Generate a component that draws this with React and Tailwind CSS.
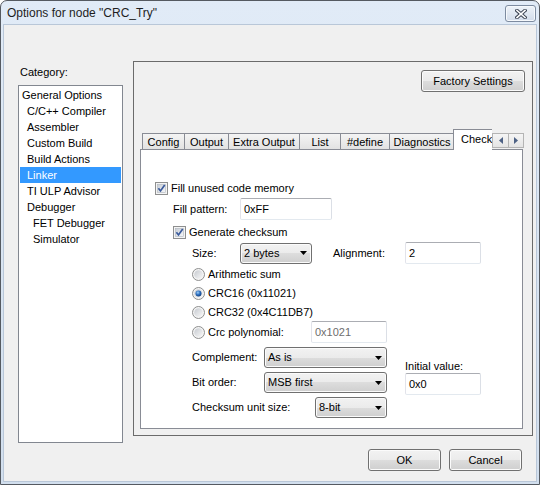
import React from "react";

const Check = () => (
  <svg width="13" height="13" viewBox="0 0 13 13" className="shrink-0">
    <defs>
      <linearGradient id="cbg" x1="0" y1="0" x2="1" y2="1">
        <stop offset="0" stopColor="#c6ccd4" />
        <stop offset="1" stopColor="#f7f8fa" />
      </linearGradient>
    </defs>
    <rect x="0.5" y="0.5" width="12" height="12" fill="#f4f4f4" stroke="#8e8f8f" />
    <rect x="2.5" y="2.5" width="8" height="8" fill="url(#cbg)" stroke="#aeb4bd" strokeWidth="0.6" />
    <path d="M3.4 6.2 L5.5 8.9 L9.7 3.1" fill="none" stroke="#3a5a9c" strokeWidth="1.7" />
  </svg>
);

const Radio = ({ on }) => (
  <svg width="13" height="13" viewBox="0 0 13 13" className="shrink-0">
    <defs>
      <linearGradient id="rbg" x1="0" y1="0" x2="1" y2="1">
        <stop offset="0" stopColor="#c6cad0" />
        <stop offset="1" stopColor="#f8f8f8" />
      </linearGradient>
      <radialGradient id="rdot" cx="0.4" cy="0.35" r="0.7">
        <stop offset="0" stopColor="#9fd0f8" />
        <stop offset="0.5" stopColor="#2d6fc0" />
        <stop offset="1" stopColor="#0c3978" />
      </radialGradient>
    </defs>
    <circle cx="6.5" cy="6.5" r="6" fill="#f4f4f4" stroke="#8e8f8f" />
    <circle cx="6.5" cy="6.5" r="4.3" fill="url(#rbg)" />
    {on && <circle cx="6.5" cy="6.5" r="3" fill="url(#rdot)" />}
  </svg>
);

const Arrow = () => (
  <svg width="7" height="4" viewBox="0 0 7 4" className="shrink-0">
    <polygon points="0,0 7,0 3.5,4" fill="#000" />
  </svg>
);

const Input = ({ cls, value, grey }) => (
  <div
    className={`${cls} h-[22px] shrink-0 bg-white border border-[#abadb3] border-l-[#e2e3ea] border-r-[#dbdfe6] border-b-[#e3e9ef] rounded-[2px] pl-[3px] flex items-center leading-[13px] ${
      grey ? "text-[#6d6d6d]" : "text-black"
    }`}
  >
    {value}
  </div>
);

const Select = ({ cls, value }) => (
  <div
    className={`${cls} h-[21px] shrink-0 rounded-[3px] border border-[#707070] bg-[linear-gradient(to_bottom,#f2f2f2_0%,#ebebeb_50%,#dddddd_50%,#cfcfcf_100%)] shadow-[inset_0_0_0_1px_#fbfbfb] flex items-center justify-between pl-[3px] pr-[4px] leading-[13px]`}
  >
    <span>{value}</span>
    <Arrow />
  </div>
);

const Button = ({ cls, children }) => (
  <div
    className={`${cls} h-[22px] shrink-0 rounded-[3px] border border-[#707070] bg-[linear-gradient(to_bottom,#f2f2f2_0%,#ebebeb_50%,#dddddd_50%,#cfcfcf_100%)] shadow-[inset_0_0_0_1px_#fbfbfb] flex items-center justify-center leading-[13px]`}
  >
    {children}
  </div>
);

const Tab = ({ cls, children }) => (
  <div
    className={`${cls} h-[17px] shrink-0 border-l border-t border-[#898c95] bg-[linear-gradient(to_bottom,#f4f4f4,#e1e1e1)] text-center leading-[16px] whitespace-nowrap`}
  >
    {children}
  </div>
);

const ScrollBtn = ({ left, cls }) => (
  <div
    className={`${cls} self-start mt-[4px] h-[15px] shrink-0 border border-[#b4b4b4] bg-[linear-gradient(to_bottom,#f5f5f5,#e4e4e4)] flex items-center justify-center`}
  >
    <svg width="4" height="7" viewBox="0 0 4 7">
      {left ? (
        <polygon points="4,0 4,7 0,3.5" fill="#4d6185" />
      ) : (
        <polygon points="0,0 0,7 4,3.5" fill="#4d6185" />
      )}
    </svg>
  </div>
);

const categories = [
  { t: "General Options", lvl: 0 },
  { t: "C/C++ Compiler", lvl: 1 },
  { t: "Assembler", lvl: 1 },
  { t: "Custom Build", lvl: 1 },
  { t: "Build Actions", lvl: 1 },
  { t: "Linker", lvl: 1, sel: true },
  { t: "TI ULP Advisor", lvl: 1 },
  { t: "Debugger", lvl: 1 },
  { t: "FET Debugger", lvl: 2 },
  { t: "Simulator", lvl: 2 },
];

export default function App() {
  return (
    <div className="w-[540px] h-[485px] bg-white font-['Liberation_Sans',Arial,sans-serif] text-[11px] text-black">
      <div className="w-[540px] h-[485px] flex flex-col border border-[#555a61] rounded-t-[7px] overflow-hidden bg-[linear-gradient(to_bottom,#e1ebf7,#d2dfee)]">
        {/* title bar */}
        <div className="h-[23px] shrink-0 flex justify-between pl-[6px] pr-[3px]">
          <div className="pt-[5px] text-[12px] leading-[15px] text-[#1e1e1e]">
            {'Options for node "CRC_Try"'}
          </div>
          <div className="mt-[4px] w-[31px] h-[17px] rounded-[3px] border border-[#7d8ba0] bg-[linear-gradient(to_bottom,#eef3f9,#d2dcea)] shadow-[inset_0_0_0_1px_#f6f9fc] flex items-center justify-center">
            <svg width="12" height="10" viewBox="0 0 12 10">
              <path d="M2 1.5 L10 8.5 M10 1.5 L2 8.5" stroke="#3f4756" strokeWidth="3.6" strokeLinecap="square" />
              <path d="M2 1.5 L10 8.5 M10 1.5 L2 8.5" stroke="#ffffff" strokeWidth="1.6" strokeLinecap="square" />
            </svg>
          </div>
        </div>

        {/* body */}
        <div className="flex-1 mx-[2px] mb-[2px] border border-[#b9c7d8] bg-[#f0f0f0] flex flex-col">
          <div className="flex items-start pt-[36px]">
            {/* left column */}
            <div className="ml-[14px] w-[105px] shrink-0 flex flex-col">
              <div className="mt-[4px] h-[14px] leading-[14px] pl-[2px]">Category:</div>
              <div className="mt-[6px] h-[358px] border border-[#828790] bg-white p-[1px] flex flex-col">
                {categories.map((c) => (
                  <div
                    key={c.t}
                    className={`h-[16px] leading-[16px] whitespace-nowrap ${
                      c.lvl === 0 ? "pl-[2px]" : c.lvl === 1 ? "pl-[7px]" : "pl-[13px]"
                    } ${c.sel ? "bg-[#3399ff] text-white" : ""}`}
                  >
                    {c.t}
                  </div>
                ))}
              </div>
            </div>

            {/* right panel */}
            <div className="ml-[10px] w-[400px] h-[375px] shrink-0 border border-[#6b6b6b] flex flex-col">
              <Button cls="self-end mt-[8px] mr-[7px] w-[104px]">Factory Settings</Button>

              {/* tabs */}
              <div className="mt-[37px] ml-[8px] h-[21px] flex items-end">
                <Tab cls="w-[42px]">Config</Tab>
                <Tab cls="w-[44px]">Output</Tab>
                <Tab cls="w-[71px]">Extra Output</Tab>
                <Tab cls="w-[41px]">List</Tab>
                <Tab cls="w-[49px]">#define</Tab>
                <Tab cls="w-[66px] border-r">Diagnostics</Tab>
                <div className="relative z-10 -ml-[2px] w-[39px] h-[21px] shrink-0 border-l border-t border-[#898c95] bg-white pl-[7px] overflow-hidden whitespace-nowrap leading-[19px]">
                  Check
                </div>
                <ScrollBtn left cls="w-[17px]" />
                <ScrollBtn cls="w-[16px] -ml-[1px]" />
              </div>

              {/* tab page */}
              <div className="-mt-[1px] ml-[6px] w-[383px] h-[280px] border border-[#898c95] bg-white flex flex-col">
                <div className="mt-[32px] h-[13px] pl-[14px] flex items-center gap-[3px] leading-[13px]">
                  <Check />
                  <span>Fill unused code memory</span>
                </div>
                <div className="mt-[3px] h-[22px] pl-[32px] flex items-center">
                  <span className="w-[67px] shrink-0">Fill pattern:</span>
                  <Input cls="w-[92px]" value="0xFF" />
                </div>
                <div className="mt-[6px] h-[13px] pl-[32px] flex items-center gap-[3px] leading-[13px]">
                  <Check />
                  <span>Generate checksum</span>
                </div>
                <div className="mt-[3px] h-[22px] pl-[51px] flex items-center">
                  <span className="w-[48px] shrink-0">Size:</span>
                  <Select cls="w-[72px]" value="2 bytes" />
                  <span className="ml-[21px] w-[72px] shrink-0">Alignment:</span>
                  <Input cls="w-[76px]" value="2" />
                </div>
                <div className="mt-[4px] h-[13px] pl-[51px] flex items-center gap-[3px] leading-[13px]">
                  <Radio />
                  <span>Arithmetic sum</span>
                </div>
                <div className="mt-[6px] h-[13px] pl-[51px] flex items-center gap-[3px] leading-[13px]">
                  <Radio on />
                  <span>CRC16 (0x11021)</span>
                </div>
                <div className="mt-[6px] h-[13px] pl-[51px] flex items-center gap-[3px] leading-[13px]">
                  <Radio />
                  <span>CRC32 (0x4C11DB7)</span>
                </div>
                <div className="mt-[2px] h-[22px] pl-[51px] flex items-center">
                  <div className="w-[119px] shrink-0 flex items-center gap-[3px] leading-[13px]">
                    <Radio />
                    <span>Crc polynomial:</span>
                  </div>
                  <Input cls="w-[76px]" value="0x1021" grey />
                </div>
                <div className="mt-[4px] pl-[51px] flex">
                  <div className="w-[195px] shrink-0 flex flex-col gap-[4px]">
                    <div className="h-[21px] flex items-center">
                      <span className="w-[72px] shrink-0">Complement:</span>
                      <Select cls="w-[123px]" value="As is" />
                    </div>
                    <div className="h-[21px] flex items-center">
                      <span className="w-[72px] shrink-0">Bit order:</span>
                      <Select cls="w-[123px]" value="MSB first" />
                    </div>
                    <div className="h-[21px] flex items-center">
                      <span className="w-[123px] shrink-0">Checksum unit size:</span>
                      <Select cls="w-[72px]" value="8-bit" />
                    </div>
                  </div>
                  <div className="ml-[18px] pt-[12px] flex flex-col">
                    <div className="h-[14px] leading-[14px]">Initial value:</div>
                    <Input cls="w-[76px]" value="0x0" />
                  </div>
                </div>
              </div>
            </div>
          </div>

          {/* buttons */}
          <div className="mt-[6px] pr-[14px] flex justify-end gap-[8px]">
            <Button cls="w-[73px]">OK</Button>
            <Button cls="w-[73px]">Cancel</Button>
          </div>
        </div>
      </div>
    </div>
  );
}
